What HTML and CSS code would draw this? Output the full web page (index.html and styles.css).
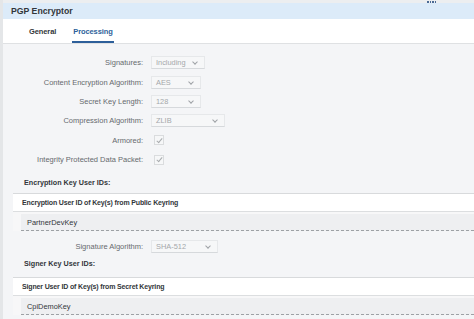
FILE: index.html
```html
<!DOCTYPE html>
<html lang="en">
<head>
  <meta charset="UTF-8">
  <title>PGP Encryptor</title>
  <link rel="stylesheet" href="styles.css">
</head>
<body>
  <div class="page">
    <div class="topstrip">
      <div class="more"><i></i><i></i><i></i><i></i></div>
    </div>
    <div class="header">PGP Encryptor</div>
    <div class="tabs">
      <div class="tab">General</div>
      <div class="tab active">Processing</div>
    </div>

    <div class="form">
      <div class="label">Signatures:</div>
      <div class="control"><div class="select w54">Including <span class="chev"></span></div></div>

      <div class="label">Content Encryption Algorithm:</div>
      <div class="control"><div class="select w50">AES <span class="chev"></span></div></div>

      <div class="label">Secret Key Length:</div>
      <div class="control"><div class="select w50">128 <span class="chev"></span></div></div>

      <div class="label">Compression Algorithm:</div>
      <div class="control"><div class="select w74">ZLIB <span class="chev"></span></div></div>

      <div class="label">Armored:</div>
      <div class="control"><div class="checkbox"></div></div>

      <div class="label">Integrity Protected Data Packet:</div>
      <div class="control"><div class="checkbox"></div></div>
    </div>

    <div class="section-title">Encryption Key User IDs:</div>
    <div class="table">
      <div class="th">Encryption User ID of Key(s) from Public Keyring</div>
      <div class="tr"><div class="td">PartnerDevKey</div></div>
    </div>

    <div class="form single">
      <div class="label">Signature Algorithm:</div>
      <div class="control"><div class="select w67">SHA-512 <span class="chev"></span></div></div>
    </div>

    <div class="section-title second">Signer Key User IDs:</div>
    <div class="table">
      <div class="th">Signer User ID of Key(s) from Secret Keyring</div>
      <div class="tr"><div class="td">CpiDemoKey</div></div>
    </div>
  </div>
</body>
</html>
```

FILE: styles.css
```css
body {
  margin: 0;
  background-color: #f4f5f7;
  font-family: "Liberation Sans", Arial, sans-serif;
  color: #32363a;
  overflow: hidden;
}

.page {
  border-left: 3px solid #e4e6e8;
  min-height: 319px;
}

.topstrip {
  height: 3px;
  background-color: #eceef0;
  position: relative;
}

/* overflow dots in the shell bar */
.more {
  position: absolute;
  left: 424px;
  top: 1px;
  display: flex;
  gap: 1px;
}

.more i {
  width: 1.5px;
  height: 1.5px;
  background-color: #4a6a95;
}

.header {
  height: 16px;
  line-height: 17px;
  background-color: #dcebf9;
  font-size: 8.7px;
  font-weight: bold;
  padding-left: 8px;
}

.tabs {
  height: 24px;
  background-color: #fff;
  border-bottom: 1px solid #dfe1e3;
  display: flex;
  gap: 15px;
  padding-left: 25px;
}

.tab {
  font-size: 7.5px;
  font-weight: bold;
  line-height: 25px;
  color: #32363a;
  padding: 0 1px;
  letter-spacing: -0.1px;
}

.tab.active {
  color: #2d5f9a;
  border-bottom: 2px solid #2d5f9a;
  height: 22px;
}

.form {
  display: grid;
  grid-template-columns: 140px 1fr;
  column-gap: 8px;
  grid-auto-rows: 19.4px;
  padding-top: 9px;
}

.form.single {
  padding-top: 5px;
}

.label {
  font-size: 7.5px;
  color: #666a6e;
  display: flex;
  align-items: center;
  justify-content: flex-end;
}

.control {
  display: flex;
  align-items: center;
}

.select {
  height: 13px;
  box-sizing: border-box;
  background-color: #f6f7f8;
  border: 1px solid #e6e8ea;
  border-bottom-color: #d6d9dc;
  font-size: 7.4px;
  color: #a4a7aa;
  padding-left: 4px;
  display: flex;
  align-items: center;
  position: relative;
}

.w50 { width: 50px; }
.w54 { width: 54px; }
.w67 { width: 67px; }
.w74 { width: 74px; }

.chev {
  position: absolute;
  right: 7px;
  top: 3px;
  width: 3px;
  height: 3px;
  border-right: 1px solid #9ea2a6;
  border-bottom: 1px solid #9ea2a6;
  transform: rotate(45deg);
}

.checkbox {
  width: 8px;
  height: 8px;
  margin-left: 3px;
  border: 1px solid #dadcde;
  background-color: #f6f7f8;
  position: relative;
}

.checkbox::after {
  content: "";
  position: absolute;
  left: 2.5px;
  top: 0.5px;
  width: 2px;
  height: 5px;
  border-right: 1px solid #a8abae;
  border-bottom: 1px solid #a8abae;
  transform: rotate(40deg);
}

.section-title {
  font-size: 7.2px;
  font-weight: bold;
  padding-left: 21px;
  height: 13px;
  line-height: 13px;
  margin-top: 7px;
  margin-bottom: 4px;
}

.section-title.second {
  margin-top: 1px;
  margin-bottom: 7px;
}

.table {
  margin-left: 10px;
  border-top: 1px solid #d8dadc;
}

.th {
  background-color: #fff;
  height: 17px;
  line-height: 18px;
  font-size: 7px;
  font-weight: bold;
  letter-spacing: -0.15px;
  color: #32363a;
  padding-left: 9px;
  border-bottom: 1px solid #dcdee0;
}

.tr {
  padding-left: 8px;
  padding-top: 2px;
  background-color: #f7f7f8;
}

.td {
  background-color: #eeeff1;
  height: 16px;
  line-height: 18px;
  font-size: 7.4px;
  color: #32363a;
  padding-left: 6px;
  border-bottom: 1px dashed #9da1a5;
}
```
